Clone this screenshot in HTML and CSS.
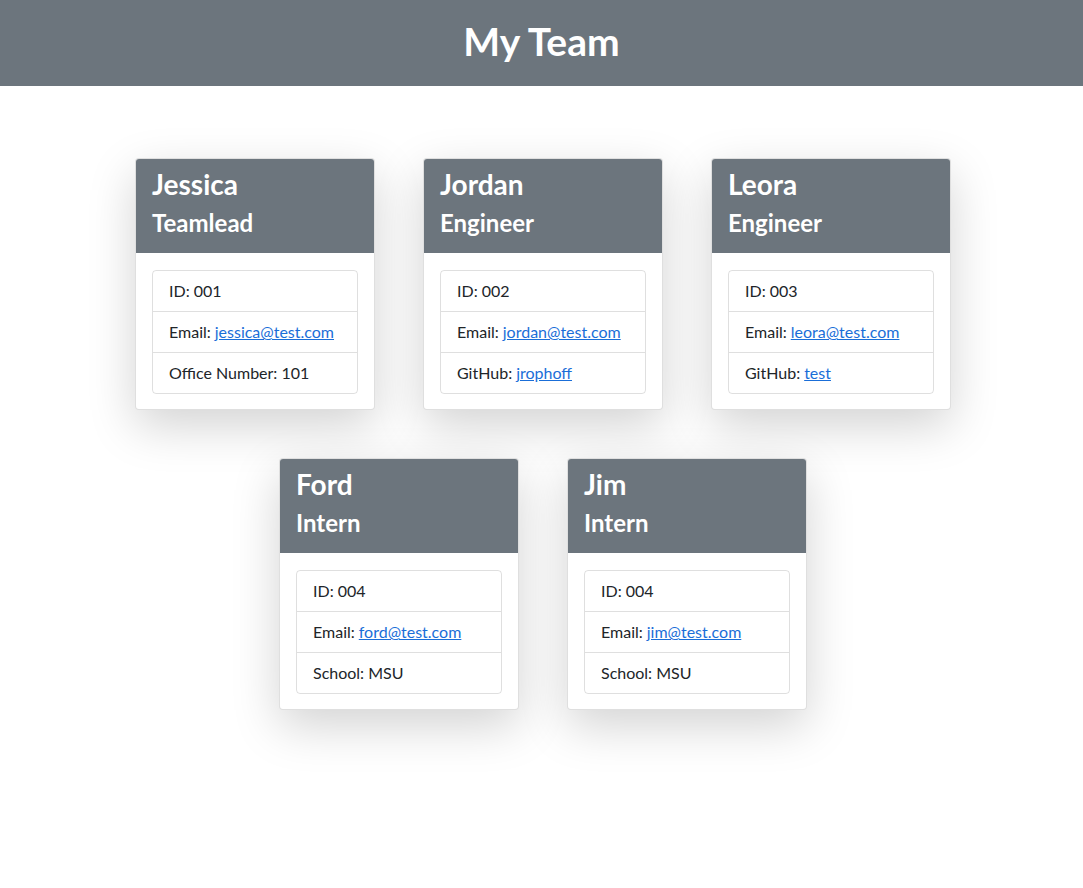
FILE: index.html
```html
<!DOCTYPE html>
<html lang="en">
<head>
<meta charset="utf-8">
<title>My Team</title>
<link rel="stylesheet" href="styles.css">
</head>
<body>
<header class="top">
  <h1 class="top-title">My Team</h1>
</header>
<main class="team">
  <div class="card">
    <div class="card-header">
      <h2 class="name">Jessica</h2>
      <h3 class="role">Teamlead</h3>
    </div>
    <div class="card-body">
      <ul class="list">
        <li class="item">ID: 001</li>
        <li class="item">Email: <a href="#">jessica@test.com</a></li>
        <li class="item">Office Number: 101</li>
      </ul>
    </div>
  </div>
  <div class="card">
    <div class="card-header">
      <h2 class="name">Jordan</h2>
      <h3 class="role">Engineer</h3>
    </div>
    <div class="card-body">
      <ul class="list">
        <li class="item">ID: 002</li>
        <li class="item">Email: <a href="#">jordan@test.com</a></li>
        <li class="item">GitHub: <a href="#">jrophoff</a></li>
      </ul>
    </div>
  </div>
  <div class="card">
    <div class="card-header">
      <h2 class="name">Leora</h2>
      <h3 class="role">Engineer</h3>
    </div>
    <div class="card-body">
      <ul class="list">
        <li class="item">ID: 003</li>
        <li class="item">Email: <a href="#">leora@test.com</a></li>
        <li class="item">GitHub: <a href="#">test</a></li>
      </ul>
    </div>
  </div>
  <div class="card">
    <div class="card-header">
      <h2 class="name">Ford</h2>
      <h3 class="role">Intern</h3>
    </div>
    <div class="card-body">
      <ul class="list">
        <li class="item">ID: 004</li>
        <li class="item">Email: <a href="#">ford@test.com</a></li>
        <li class="item">School: MSU</li>
      </ul>
    </div>
  </div>
  <div class="card">
    <div class="card-header">
      <h2 class="name">Jim</h2>
      <h3 class="role">Intern</h3>
    </div>
    <div class="card-body">
      <ul class="list">
        <li class="item">ID: 004</li>
        <li class="item">Email: <a href="#">jim@test.com</a></li>
        <li class="item">School: MSU</li>
      </ul>
    </div>
  </div>
</main>
</body>
</html>
```
FILE: styles.css
```css
* { box-sizing: border-box; }
html, body { background: #fff; }
body {
  margin: 0;
  font-family: Lato, "Open Sans", sans-serif;
  font-size: 16px;
  color: #212529;
  min-height: 888px;
}
.top {
  background: #6c757d;
  height: 86px;
  display: flex;
  align-items: center;
  justify-content: center;
  padding-bottom: 4px;
}
.top-title {
  margin: 0;
  color: #fff;
  font-size: 39px;
  font-weight: 700;
  line-height: 1;
}
.team {
  width: 1000px;
  margin: 0 auto;
  padding: 72px 0 150px 3px;
  display: flex;
  flex-wrap: wrap;
  justify-content: center;
  column-gap: 48px;
  row-gap: 48px;
}
.card {
  width: 240px;
  border: 1px solid rgba(0,0,0,.125);
  border-radius: 4px;
  background: #fff;
  box-shadow: 0 16px 48px rgba(0,0,0,.175);
  overflow: hidden;
}
.card-header {
  background: #6c757d;
  color: #fff;
  padding: 4px 16px 13px;
}
.name {
  margin: 0;
  font-size: 28px;
  font-weight: 700;
  line-height: 43px;
}
.role {
  margin: 0;
  font-size: 24px;
  font-weight: 700;
  line-height: 34px;
}
.card-body {
  padding: 17px 16px 15px;
}
.list {
  list-style: none;
  margin: 0;
  padding: 0;
  border: 1px solid rgba(0,0,0,.125);
  border-radius: 4px;
}
.item {
  height: 40px;
  padding: 0 16px;
  display: flex;
  align-items: center;
  line-height: 24px;
  white-space: nowrap;
}
.item + .item {
  height: 41px;
  border-top: 1px solid rgba(0,0,0,.125);
}
.item a {
  color: #1a6ed8;
  text-decoration: underline;
  margin-left: 4px;
}
```
